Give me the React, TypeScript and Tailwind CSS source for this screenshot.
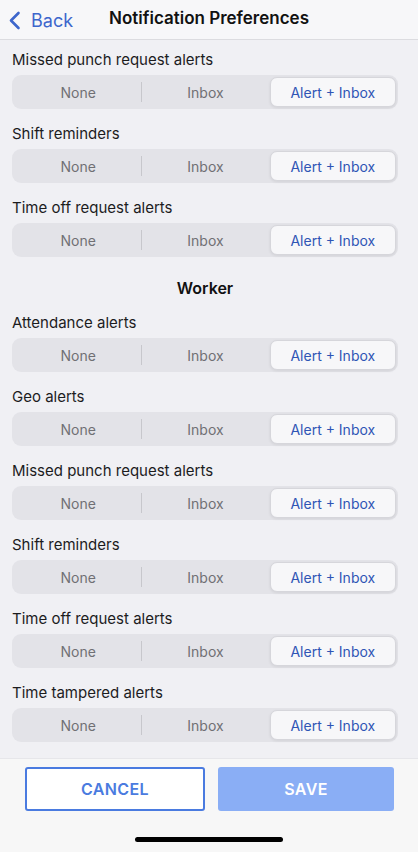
import React, { useState } from 'react';

type Level = 'none' | 'inbox' | 'alert';

const OPTIONS: { key: Level; label: string }[] = [
  { key: 'none', label: 'None' },
  { key: 'inbox', label: 'Inbox' },
  { key: 'alert', label: 'Alert + Inbox' },
];

const managerRows = ['Missed punch request alerts', 'Shift reminders', 'Time off request alerts'];
const workerRows = [
  'Attendance alerts',
  'Geo alerts',
  'Missed punch request alerts',
  'Shift reminders',
  'Time off request alerts',
  'Time tampered alerts',
];

// iOS-style segmented control
function Segmented({ value, onChange }: { value: Level; onChange: (v: Level) => void }) {
  const idx = OPTIONS.findIndex((o) => o.key === value);
  return (
    <div className="mt-[5px] flex h-[34px] items-stretch rounded-[9px] bg-[#e3e3e8] p-[2px]">
      {OPTIONS.map((o, i) => {
        const selected = o.key === value;
        // divider only between two unselected segments
        const showDivider = i > 0 && i !== idx && i - 1 !== idx;
        return (
          <div key={o.key} className="flex flex-1 items-center">
            <div className={`h-[20px] w-px ${showDivider ? 'bg-[#c7c7cc]' : 'bg-transparent'}`} />
            <button
              onClick={() => onChange(o.key)}
              className={`flex h-full flex-1 items-center justify-center rounded-[7px] text-[14px] ${
                selected
                  ? 'border border-[#d6d6db] bg-[#f7f7f9] text-[#2f55b5] shadow-[0_1px_3px_rgba(0,0,0,0.08)]'
                  : 'text-[#707074]'
              }`}
            >
              {o.label}
            </button>
          </div>
        );
      })}
    </div>
  );
}

function PrefRow({ label }: { label: string }) {
  const [value, setValue] = useState<Level>('alert');
  return (
    <div>
      <div className="h-5 text-[15px] leading-5 text-[#1c1c1e]">{label}</div>
      <Segmented value={value} onChange={setValue} />
    </div>
  );
}

export default function App() {
  return (
    <div
      className="flex h-[852px] w-[418px] flex-col overflow-hidden bg-[#f0f0f4]"
      style={{ fontFamily: 'Inter, "Noto Sans", sans-serif' }}
    >
      {/* nav bar */}
      <header className="relative flex h-[40px] shrink-0 items-center justify-center border-b border-[#dcdce0] bg-[#f7f7f9]">
        <button className="absolute left-[8px] top-[7px] flex items-center gap-[10px] text-[18px] text-[#3d66cc]">
          <svg width="13" height="19" viewBox="0 0 13 19" fill="none">
            <path d="M10.5 2L3 9.5L10.5 17" stroke="#3d66cc" strokeWidth="2.6" strokeLinecap="round" strokeLinejoin="round" />
          </svg>
          <span>Back</span>
        </button>
        <h1 className="-mt-px text-[17px] font-semibold text-[#111]">Notification Preferences</h1>
      </header>

      <main className="flex flex-1 flex-col gap-[15px] pl-3 pr-5 pt-[10px]">
        {managerRows.map((r, i) => (
          <PrefRow key={'m' + i} label={r} />
        ))}
        <div className="pt-[6px] text-center text-[16px] font-semibold leading-5 text-[#111]">Worker</div>
        {workerRows.map((r, i) => (
          <PrefRow key={'w' + i} label={r} />
        ))}
      </main>

      {/* footer actions */}
      <footer className="flex h-[94px] shrink-0 flex-col border-t border-[#e6e6ea] bg-[#f7f7f7]">
        <div className="flex gap-[13px] pl-[25px] pr-[24px] pt-[8px]">
          <button className="h-[44px] flex-1 rounded-[3px] border-2 border-[#4a7be0] bg-white text-[16px] font-semibold tracking-wide text-[#4a7be0]">
            CANCEL
          </button>
          <button className="h-[44px] flex-1 rounded-[3px] bg-[#8aaef5] text-[16px] font-semibold tracking-wide text-white">
            SAVE
          </button>
        </div>
        <div className="mt-[26px] flex justify-center">
          <div className="h-[5px] w-[148px] rounded-full bg-black" />
        </div>
      </footer>
    </div>
  );
}
